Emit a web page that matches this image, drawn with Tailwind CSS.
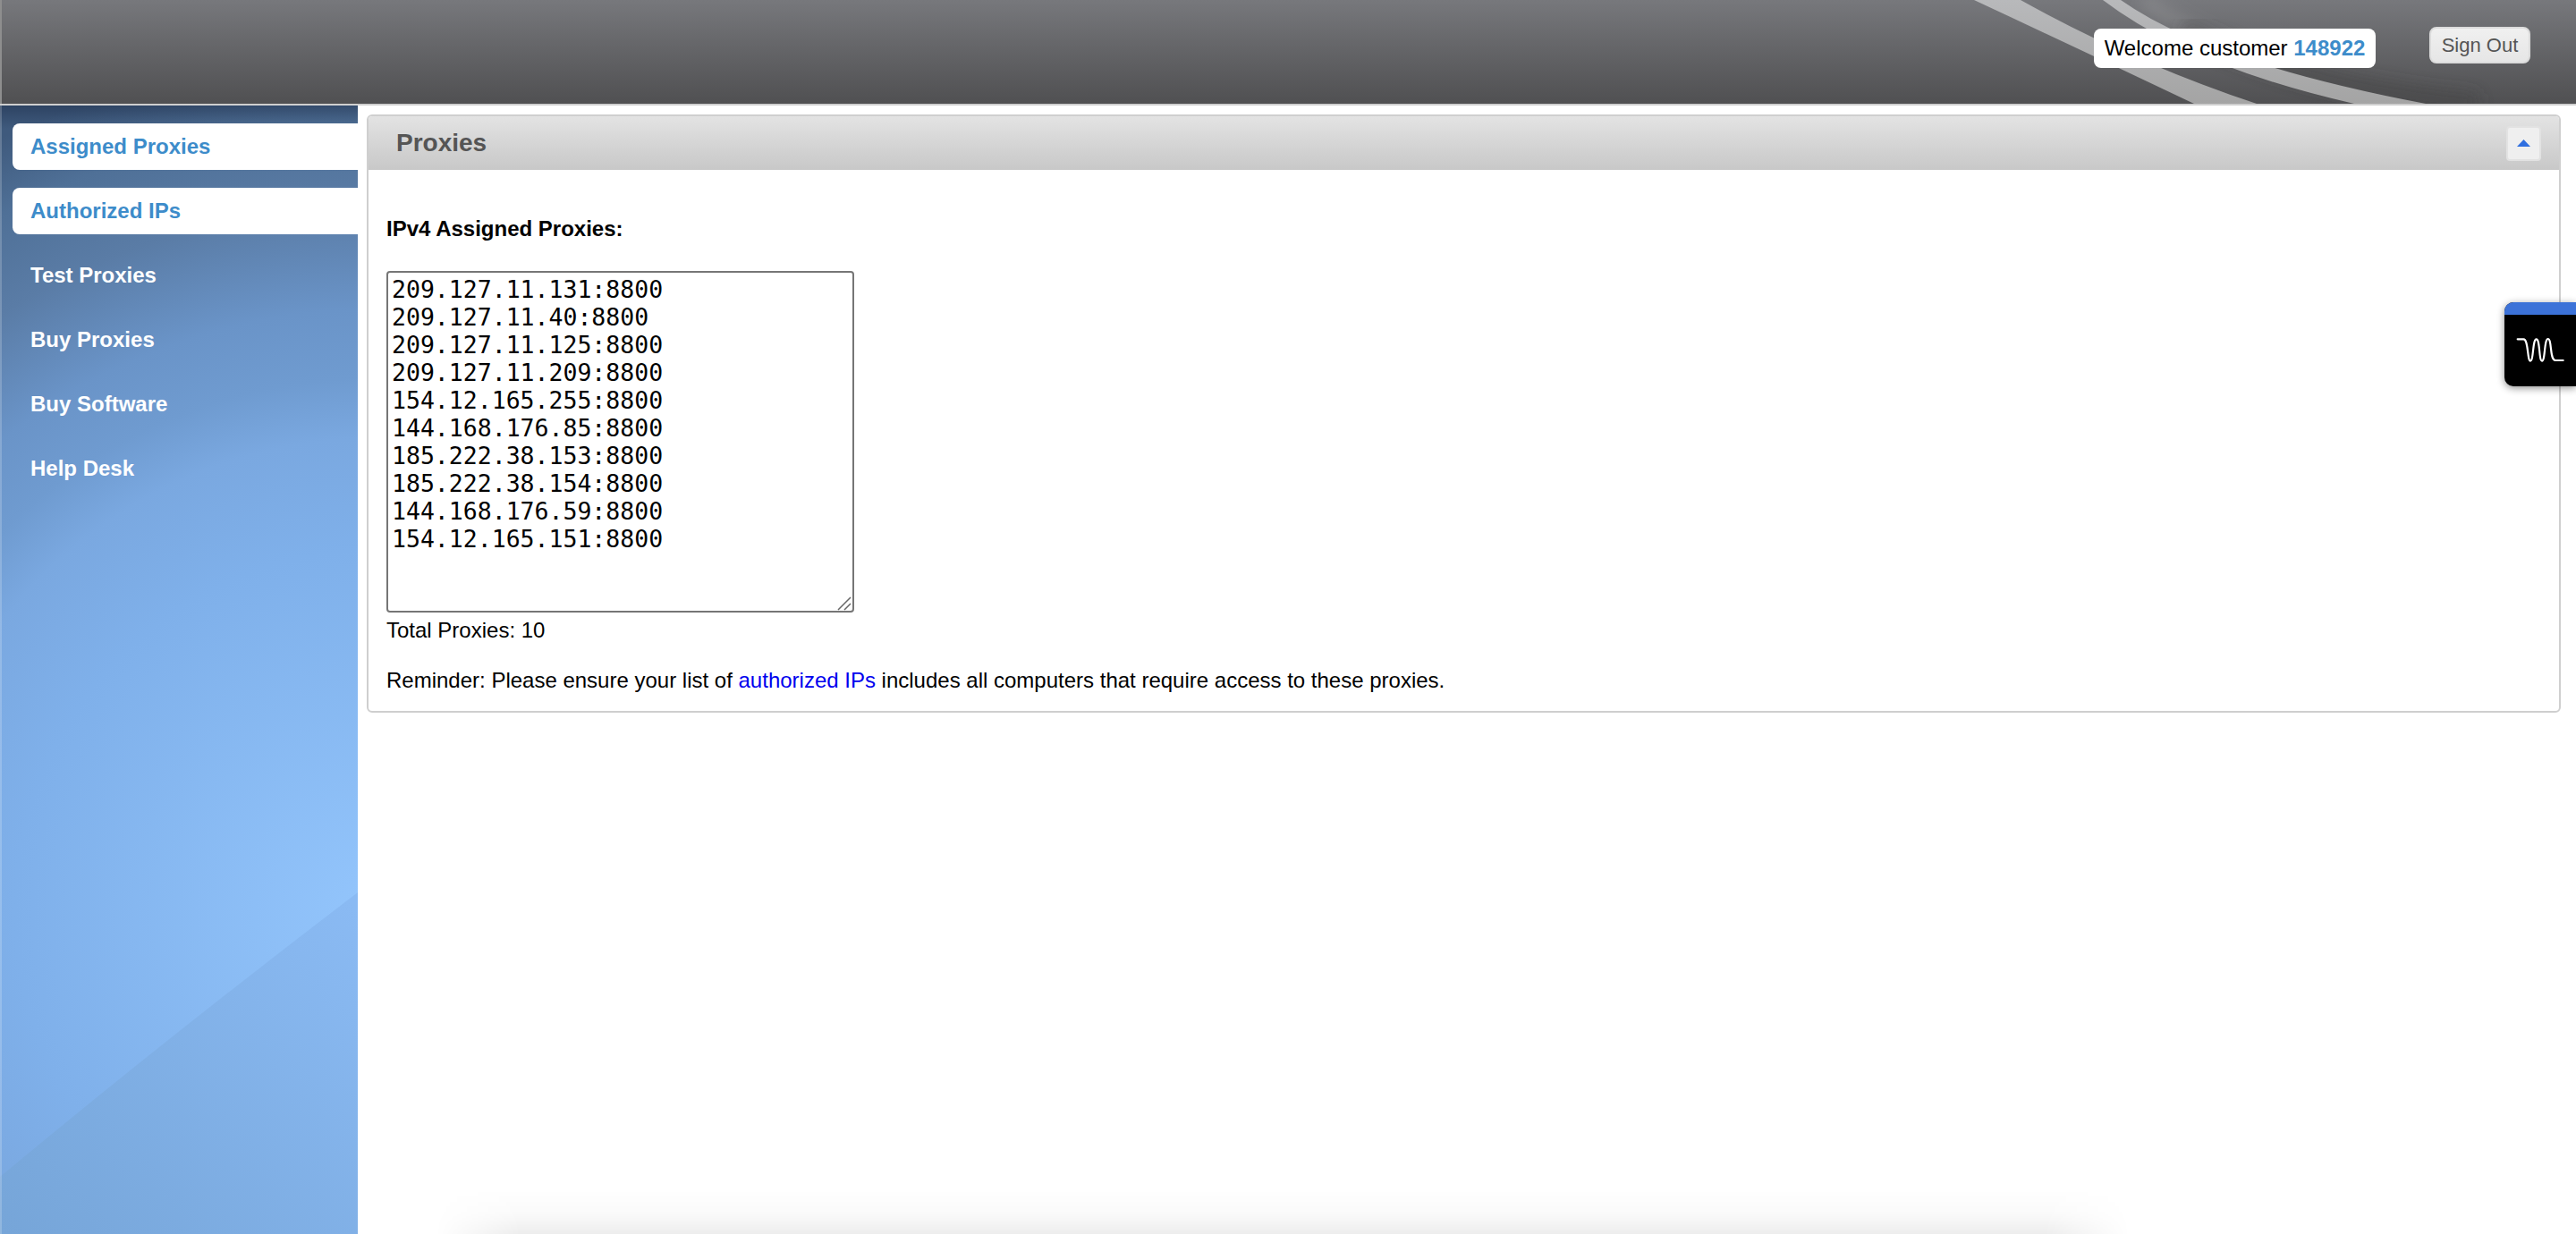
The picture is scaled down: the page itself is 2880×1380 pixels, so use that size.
<!DOCTYPE html>
<html lang="en">
<head>
  <meta charset="UTF-8" />
  <title>Proxies</title>
  <script src="https://cdn.jsdelivr.net/npm/@tailwindcss/browser@4"></script>
</head>
<body class="relative h-[1380px] overflow-hidden bg-white text-black font-['Liberation_Sans',Arial,sans-serif] text-[24px]">

  <!-- Header -->
  <header class="relative h-[118px] border-b-2 border-[#cfcfcf] bg-linear-to-b from-[#77787c] to-[#505052] overflow-hidden">
    <div class="absolute left-0 top-0 h-full w-[2px] bg-[#8e8e8e]"></div>
    <svg class="absolute inset-0" width="2880" height="116" viewBox="0 0 2880 116">
      <defs>
        <linearGradient id="band" x1="0" y1="0" x2="0" y2="1">
          <stop offset="0" stop-color="#b8b9bb" />
          <stop offset="1" stop-color="#a4a4a4" />
        </linearGradient>
        <filter id="soft"><feGaussianBlur stdDeviation="9" /></filter>
      </defs>
      <path d="M2395 0 Q2450 40 2520 62" fill="none" stroke="#fff" stroke-opacity="0.14" stroke-width="14" filter="url(#soft)" />
      <path d="M2440 30 Q2560 95 2770 116" fill="none" stroke="#3f3f41" stroke-opacity="0.45" stroke-width="22" filter="url(#soft)" />
      <path d="M2207 0 Q2325 55 2453 116 L2523 116 Q2385 70 2259 0 Z" fill="url(#band)" />
      <path d="M2351 0 Q2448 74 2632 116 L2712 116 Q2470 70 2371 0 Z" fill="url(#band)" />
    </svg>
    <div class="relative flex justify-end items-start pr-[51px]">
      <div class="mt-[32px] mr-[60px] h-[44px] w-[315px] flex items-center justify-center rounded-[8px] bg-white">
        Welcome customer&nbsp;<a class="font-bold text-[#3d8cca]">148922</a>
      </div>
      <button class="mt-[30px] h-[41px] w-[113px] rounded-[8px] border-2 border-[#dcdcdc] bg-linear-to-b from-[#f0f0f0] to-[#e6e6e6] text-[22px] text-[#555]">Sign Out</button>
    </div>
  </header>

  <div class="flex">
    <!-- Sidebar -->
    <aside class="relative h-[1262px] w-[400px] shrink-0 overflow-hidden">
      <svg class="absolute inset-0" width="400" height="1262" viewBox="0 0 400 1262">
        <defs>
          <radialGradient id="side" gradientUnits="userSpaceOnUse" cx="420" cy="900" r="960">
            <stop offset="0" stop-color="#93c5fc" />
            <stop offset="0.42" stop-color="#7fb0ea" />
            <stop offset="0.55" stop-color="#7aa8e0" />
            <stop offset="0.62" stop-color="#6f9bd0" />
            <stop offset="0.7" stop-color="#6a94c8" />
            <stop offset="0.82" stop-color="#5a7ca6" />
            <stop offset="0.92" stop-color="#4f7097" />
            <stop offset="1" stop-color="#3f5a7d" />
          </radialGradient>
          <linearGradient id="top" x1="0" y1="0" x2="0" y2="1">
            <stop offset="0" stop-color="#1c2c48" stop-opacity="0.5" />
            <stop offset="1" stop-color="#1c2c48" stop-opacity="0" />
          </linearGradient>
          <linearGradient id="lower" gradientUnits="userSpaceOnUse" x1="0" y1="1260" x2="400" y2="900">
            <stop offset="0" stop-color="#76a5d8" />
            <stop offset="1" stop-color="#8abaf3" />
          </linearGradient>
        </defs>
        <rect width="400" height="1262" fill="url(#side)" />
        <rect width="400" height="26" fill="url(#top)" />
        <path d="M0 1198 Q190 1040 400 880 L400 1262 L0 1262 Z" fill="url(#lower)" />
        <rect width="2" height="1262" fill="#ffffff" fill-opacity="0.2" />
      </svg>
      <nav class="relative flex flex-col gap-[20px] pt-[20px] pl-[14px] font-bold">
        <a class="flex h-[52px] items-center rounded-l-[8px] bg-white pl-[20px] text-[#3d8cca]">Assigned Proxies</a>
        <a class="flex h-[52px] items-center rounded-l-[8px] bg-white pl-[20px] text-[#3d8cca]">Authorized IPs</a>
        <a class="flex h-[52px] items-center pl-[20px] text-white">Test Proxies</a>
        <a class="flex h-[52px] items-center pl-[20px] text-white">Buy Proxies</a>
        <a class="flex h-[52px] items-center pl-[20px] text-white">Buy Software</a>
        <a class="flex h-[52px] items-center pl-[20px] text-white">Help Desk</a>
      </nav>
    </aside>

    <!-- Main panel -->
    <main class="flex-1 pt-[10px] pl-[10px] pr-[17px]">
      <section class="h-[669px] rounded-[6px] border-2 border-[#cfcfcf]">
        <div class="flex h-[60px] items-center justify-between rounded-t-[4px] bg-linear-to-b from-[#e3e3e3] to-[#c8c8c8] pl-[31px] pr-[20px]">
          <h2 class="text-[28px] font-bold text-[#555]">Proxies</h2>
          <button class="flex h-[39px] w-[39px] items-center justify-center rounded-[4px] border-2 border-[#e2e2e2] bg-[#efefef]">
            <svg width="15" height="8" viewBox="0 0 15 8"><path d="M7.5 0 L15 8 H0 Z" fill="#2f6fe0" /></svg>
          </button>
        </div>
        <div class="pl-[20px]">
          <h3 class="mt-[52px] h-[28px] font-bold leading-[28px]">IPv4 Assigned Proxies:</h3>
          <div class="relative mt-[33px] w-[523px]">
            <textarea readonly spellcheck="false" class="block h-[382px] w-[523px] resize-none rounded-[4px] border-2 border-[#767676] px-[4px] pt-[3px] pb-[4px] font-['DejaVu_Sans_Mono',monospace] text-[26.5px] leading-[31px] text-black outline-none">209.127.11.131:8800
209.127.11.40:8800
209.127.11.125:8800
209.127.11.209:8800
154.12.165.255:8800
144.168.176.85:8800
185.222.38.153:8800
185.222.38.154:8800
144.168.176.59:8800
154.12.165.151:8800</textarea>
            <svg class="absolute right-[3px] bottom-[2px]" width="16" height="16" viewBox="0 0 16 16"><path d="M1 15 L15 1 M8 15 L15 8" stroke="#666" stroke-width="1.5" fill="none" /></svg>
          </div>
          <p class="mt-[6px] h-[28px] leading-[28px]">Total Proxies: 10</p>
          <p class="mt-[28px] h-[28px] leading-[28px]">Reminder: Please ensure your list of <a class="text-[#0000ee]">authorized IPs</a> includes all computers that require access to these proxies.</p>
        </div>
      </section>
    </main>
  </div>

  <!-- Floating widget -->
  <div class="absolute right-0 top-[338px] h-[94px] w-[80px] overflow-hidden rounded-l-[10px] bg-black shadow-[0_2px_8px_rgba(0,0,0,0.45)]">
    <div class="h-[14px] bg-[#3c72d8]"></div>
    <svg class="ml-[13px] mt-[25px]" width="54" height="30" viewBox="160 170 162 90">
      <path d="M165 177 H185 C202 177 197 250 208 250 C219 250 215 177 228 177 C241 177 236 250 247 250 C258 250 254 176 267 176 C281 176 272 248 292 248 H318" fill="none" stroke="#fff" stroke-width="6.5" stroke-linecap="round" />
    </svg>
  </div>

  <!-- Soft shadow along the bottom edge -->
  <div class="absolute left-[487px] bottom-0 h-[50px] w-[1894px] bg-[linear-gradient(to_top,rgba(0,0,0,0.07),rgba(0,0,0,0.02)_45%,transparent)] [mask-image:linear-gradient(to_right,transparent,black_5%,black_95%,transparent)]"></div>
</body>
</html>
